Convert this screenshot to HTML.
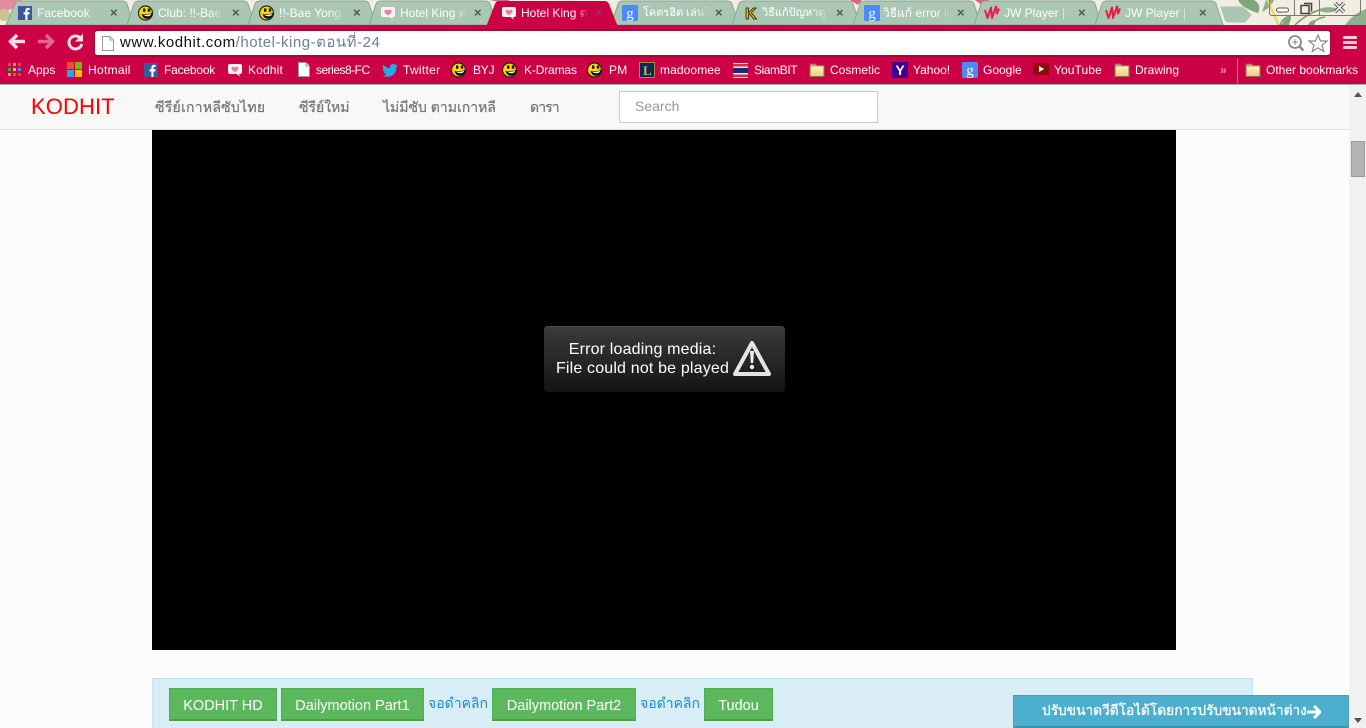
<!DOCTYPE html>
<html><head><meta charset="utf-8">
<style>
html,body{margin:0;padding:0;width:1366px;height:728px;overflow:hidden;background:#fcfcfc}
body{position:relative;font-family:"Liberation Sans","Noto Sans CJK SC",sans-serif}
.a{position:absolute;white-space:nowrap}
.tabtxt{top:5px;font-size:12px;line-height:16px;color:#fff;overflow:hidden;height:17px;-webkit-mask-image:linear-gradient(90deg,#000 78%,transparent 100%);mask-image:linear-gradient(90deg,#000 78%,transparent 100%)}
.x{top:5px;font-size:13px;line-height:16px;color:#555;font-weight:bold}
.bm{top:62px;font-size:12px;line-height:16px;color:#fff}
.ic{position:absolute}
.nav{top:97px;font-size:14px;line-height:20px;color:#777;-webkit-text-stroke:.25px #777}
.btn{background:#5cb85c;border:1px solid #4cae4c;border-bottom:2px solid #4a9e4a;color:#fff;font-size:14.5px;line-height:20px;text-align:center;box-sizing:border-box;padding-top:7px;top:688px;position:absolute;height:33px}
.th{font-size:14px;color:#1a8ad0;top:693px;line-height:20px}
</style></head><body>
<svg width="0" height="0" style="position:absolute"><defs>
<linearGradient id="fg" x1="0" y1="0" x2="0" y2="1"><stop offset="0" stop-color="#fff0c4"/><stop offset="1" stop-color="#f9c878"/></linearGradient>
<symbol id="fb" viewBox="0 0 14 14"><rect width="14" height="14" fill="#3b5998"/><path d="M9.500 14V8.500h1.800l.3-2.200H9.500V5c0-.7.2-1.100 1.100-1.100h1.100V2c-.3 0-.9-.1-1.600-.1-1.600 0-2.700 1-2.700 2.800v1.600H5.600v2.200h1.800V14z" fill="#fff"/></symbol>
<symbol id="sm" viewBox="0 0 16 16"><circle cx="7.500" cy="8" r="7" fill="#ffd800" stroke="#222" stroke-width="1.200"/><rect x="5" y="3.500" width="2.400" height="3.200" fill="#111"/><rect x="9.800" y="3.500" width="2.400" height="3.200" fill="#111"/><path d="M3.500 9c3 .8 7 .5 11-1.500 0 4-3 6.500-6 6.300C6 13.700 4.300 12 3.500 9z" fill="#111"/><path d="M5.200 9.800c2.500.4 5.500 0 8-1.200-.3 1.200-1 2-2.200 2.500-2 .4-4 0-5.800-1.300z" fill="#fff"/></symbol>
<symbol id="ht" viewBox="0 0 16 14"><path d="M3 1h10a2 2 0 0 1 2 2v6a2 2 0 0 1-2 2h-1l1 2.500L9.500 11H3a2 2 0 0 1-2-2V3a2 2 0 0 1 2-2z" fill="#f4f4f4"/><path d="M8 9.500C5.500 7.500 4.500 6.500 4.500 5c0-1.700 2.500-2 3.500-.3C9 3 11.500 3.300 11.500 5c0 1.500-1 2.500-3.500 4.500z" fill="#f27a9a"/></symbol>
<symbol id="g" viewBox="0 0 16 16"><rect width="16" height="16" rx="1.500" fill="#4c8bf5"/><text x="8" y="13" font-family="Liberation Serif,serif" font-size="15" fill="#fff" text-anchor="middle">g</text></symbol>
<symbol id="jw" viewBox="0 0 16 16"><path d="M1 5l2.500 8L7 2.500l1 10.500L12 1.500l1 7 2-5" fill="none" stroke="#ed1c47" stroke-width="2" stroke-linejoin="round"/></symbol>
<symbol id="fd" viewBox="0 0 16 15"><path d="M1 2h5.500L8 3.500h7v11H1z" fill="#c9a06a" stroke="#8f6f50" stroke-width="1"/><rect x="1.500" y="4.500" width="13" height="9.500" fill="url(#fg)"/></symbol>
<symbol id="pg" viewBox="0 0 12 15"><path d="M.5.500h7.500l3.500 3.500v10.500H.5z" fill="#fff" stroke="#999"/><path d="M8 .500V4h3.500" fill="#e8e8e8" stroke="#999"/></symbol>
</defs></svg>

<!-- window frame -->
<div class="a" style="left:0;top:0;width:1366px;height:25px;background:#f1ede0"></div>
<svg class="ic" style="left:0;top:0" width="1366" height="25">
<path d="M0 0h22l-10 9-12 4z" fill="#e58d9c"/><circle cx="4" cy="15" r="6" fill="#c9c48f"/>
<path d="M1238 0c3 6 10 10 20 13 3-5 1-10-4-13z" fill="#7fa578"/>
<path d="M1262 12c6-3 10-7 12-12h-8z" fill="#8fb08a"/>
<path d="M1268 0c3 9 8 17 10 25" stroke="#ecd774" stroke-width="2.500" fill="none"/>
<path d="M1280 25c2-5 6-8 10-9l-2 9zM1295 25c6-6 16-13 30-17M1311 25c4-5 8-7 14-8" stroke="#7d9f60" stroke-width="1.500" fill="none"/>
<path d="M1282 25c1-5 5-8 9-8 0 4-2 7-4 8z" fill="#7fa578"/>
<path d="M1318 10c5-3 13-4 20-1-4 4-14 5-20 1z" fill="#8fb08a"/>
<path d="M1345 25c5-6 10-12 21-16v16z" fill="#8fb08a"/>
<path d="M1308 25c2-4 5-5 8-5l-2 5z" fill="#7fa578"/>
<path d="M490 0h20l-6 3zM850 0h12l-4 5zM975 0h14l-6 6z" fill="#d8657f"/>
</svg>

<!-- tabs -->
<svg class="ic" style="left:0;top:0" width="1366" height="27">
<g fill="#a9c7b3" stroke="#8aa596" stroke-width="1">
<path d="M6 25 L15 4 Q16 1 20 1 H122 Q126 1 127 4 L134 25z"/>
<path d="M127 25 L134 4 Q135 1 139 1 H243 Q247 1 248 4 L255 25z"/>
<path d="M248 25 L255 4 Q256 1 260 1 H364 Q368 1 369 4 L376 25z"/>
<path d="M369 25 L376 4 Q377 1 381 1 H485 Q489 1 490 4 L497 25z"/>
<path d="M611 25 L618 4 Q619 1 623 1 H727 Q731 1 732 4 L739 25z"/>
<path d="M732 25 L739 4 Q740 1 744 1 H848 Q852 1 853 4 L860 25z"/>
<path d="M853 25 L860 4 Q861 1 865 1 H969 Q973 1 974 4 L981 25z"/>
<path d="M974 25 L981 4 Q982 1 986 1 H1090 Q1094 1 1095 4 L1102 25z"/>
<path d="M1095 25 L1102 4 Q1103 1 1107 1 H1211 Q1215 1 1216 4 L1223 25z"/>
</g>
<path d="M1221 7 H1240 Q1243 7 1245 9 L1251 15 L1245 22 H1229 Q1226 22 1225 19z" fill="#a9c7b3" stroke="#a9c7b3"/>
<path d="M486 27 L495 4 Q496 1 500 1 H604 Q608 1 609 4 L618 27z" fill="#cc0044"/>
</svg>
<svg class="ic" style="left:18px;top:6px" width="14" height="14"><use href="#fb"/></svg>
<svg class="ic" style="left:138px;top:5px" width="16" height="16"><use href="#sm"/></svg>
<svg class="ic" style="left:259px;top:5px" width="16" height="16"><use href="#sm"/></svg>
<svg class="ic" style="left:380px;top:6px" width="16" height="14"><use href="#ht"/></svg>
<svg class="ic" style="left:501px;top:6px" width="16" height="14"><use href="#ht"/></svg>
<svg class="ic" style="left:622px;top:5px" width="16" height="16"><use href="#g"/></svg>
<svg class="ic" style="left:744px;top:5px" width="16" height="16"><text x="1" y="14" font-family="Liberation Sans,sans-serif" font-size="16" font-weight="bold" fill="#f6c700" stroke="#111" stroke-width=".8">K</text></svg>
<svg class="ic" style="left:864px;top:5px" width="16" height="16"><use href="#g"/></svg>
<svg class="ic" style="left:984px;top:5px" width="16" height="16"><use href="#jw"/></svg>
<svg class="ic" style="left:1105px;top:5px" width="16" height="16"><use href="#jw"/></svg>
<div class="a tabtxt" style="left:37px;width:62px">Facebook</div><div class="a x" style="left:110px">×</div>
<div class="a tabtxt" style="left:158px;width:66px">Club: !!-Bae Yong</div><div class="a x" style="left:232px">×</div>
<div class="a tabtxt" style="left:279px;width:66px">!!-Bae Yong Joon</div><div class="a x" style="left:353px">×</div>
<div class="a tabtxt" style="left:400px;width:68px">Hotel King ตอน</div><div class="a x" style="left:474px">×</div>
<div class="a tabtxt" style="left:521px;width:68px">Hotel King ตอน</div><div class="a x" style="left:595px;color:#8a3a55">×</div>
<div class="a tabtxt" style="left:643px;width:66px;font-size:11px">โคตรฮิต เล่นไม่</div><div class="a x" style="left:715px">×</div>
<div class="a tabtxt" style="left:762px;width:68px;font-size:11px">วิธีแก้ปัญหาดู</div><div class="a x" style="left:836px">×</div>
<div class="a tabtxt" style="left:883px;width:68px">วิธีแก้ error loading</div><div class="a x" style="left:957px">×</div>
<div class="a tabtxt" style="left:1004px;width:68px">JW Player | "Error</div><div class="a x" style="left:1078px">×</div>
<div class="a tabtxt" style="left:1125px;width:68px">JW Player | Trouble</div><div class="a x" style="left:1199px">×</div>

<!-- window buttons -->
<div class="a" style="left:1269px;top:-2px;width:92px;height:18px;border:1px solid #7b7b70;border-radius:0 0 3px 3px;box-sizing:border-box"></div>
<div class="a" style="left:1294px;top:0;width:1px;height:15px;background:#7b7b70"></div>
<div class="a" style="left:1319px;top:0;width:1px;height:15px;background:#7b7b70"></div>
<svg class="ic" style="left:1270px;top:0" width="90" height="16">
<rect x="6.500" y="8" width="12" height="4" rx="2" fill="#fff" stroke="#555"/>
<rect x="31" y="5.500" width="8" height="8" fill="none" stroke="#444" stroke-width="1.500"/><path d="M34 3.500h7.500v8" fill="none" stroke="#444" stroke-width="1.500"/>
<path d="M65 3l9 9M74 3l-9 9" stroke="#555" stroke-width="3.500"/><path d="M65 3l9 9M74 3l-9 9" stroke="#fff" stroke-width="1.500"/>
</svg>

<!-- toolbar -->
<div class="a" style="left:0;top:25px;width:1366px;height:59px;background:#cc0044"></div>
<div class="a" style="left:0;top:84px;width:1366px;height:1px;background:#aaa"></div>
<svg class="ic" style="left:0;top:25px" width="95" height="32">
<path d="M17 10.500l-6.500 6.500 6.500 6.500M11 17h14" transform="translate(0,-.5)" stroke="#fbdbe6" stroke-width="3.500" fill="none"/>
<path d="M46 10.500l6.500 6.500-6.500 6.500M52 17H38" transform="translate(0,-.5)" stroke="#e0678f" stroke-width="3.500" fill="none"/>
<path d="M81 14a6.500 6.500 0 1 0 .8 5" stroke="#fbdbe6" stroke-width="3" fill="none"/><path d="M83 8.500v8h-8z" fill="#fbdbe6"/>
</svg>
<div class="a" style="left:94px;top:29px;width:1237px;height:28px;background:#fff;border:1px solid #a00836;border-width:2px 1px;border-radius:4px;box-sizing:border-box"></div>
<svg class="ic" style="left:102px;top:36px" width="12" height="15"><use href="#pg"/></svg>
<div class="a" style="left:120px;top:33px;font-size:15px;line-height:20px;color:#111;letter-spacing:.52px">www.kodhit.com<span style="color:#6d8097">/hotel-king-ตอนที่-24</span></div>
<svg class="ic" style="left:1286px;top:33px" width="44" height="20">
<circle cx="9" cy="9" r="6" fill="none" stroke="#888" stroke-width="1.800"/><path d="M13.500 13.500l4 4" stroke="#888" stroke-width="2.500"/><path d="M6 9h6M9 6v6" stroke="#888"/>
<path d="M32 2l2.600 6h6.400l-5 4.200 1.800 6.300-5.800-3.700-5.800 3.700 1.800-6.300-5-4.200h6.400z" fill="#fff" stroke="#888" stroke-width="1.200"/>
</svg>
<svg class="ic" style="left:1343px;top:35px" width="15" height="16"><rect width="14" height="3" y="1" rx="1" fill="#f8c8d8"/><rect width="14" height="3" y="6" rx="1" fill="#f8c8d8"/><rect width="14" height="3" y="11" rx="1" fill="#f8c8d8"/></svg>

<!-- bookmarks -->
<svg class="ic" style="left:8px;top:63px" width="14" height="14">
<g><rect width="3" height="3" fill="#e8453c"/><rect x="5" width="3" height="3" fill="#e8a33c"/><rect x="10" width="3" height="3" fill="#e8453c"/><rect y="5" width="3" height="3" fill="#3ca54c"/><rect x="5" y="5" width="3" height="3" fill="#e8c93c"/><rect x="10" y="5" width="3" height="3" fill="#4c8bf5"/><rect y="10" width="3" height="3" fill="#e8a33c"/><rect x="5" y="10" width="3" height="3" fill="#3ca54c"/><rect x="10" y="10" width="3" height="3" fill="#e8453c"/></g></svg>
<div class="a bm" style="left:28px">Apps</div>
<svg class="ic" style="left:67px;top:62px" width="15" height="15"><rect width="7" height="7" fill="#e8502a"/><rect x="8" width="7" height="7" fill="#7fba00"/><rect y="8" width="7" height="7" fill="#2aa4e8"/><rect x="8" y="8" width="7" height="7" fill="#fbbc05"/></svg>
<div class="a bm" style="left:88px;letter-spacing:.3px">Hotmail</div>
<svg class="ic" style="left:144px;top:63px" width="14" height="14"><use href="#fb"/></svg>
<div class="a bm" style="left:164px;letter-spacing:-.2px">Facebook</div>
<svg class="ic" style="left:227px;top:63px" width="16" height="14"><use href="#ht"/></svg>
<div class="a bm" style="left:248px;letter-spacing:.15px">Kodhit</div>
<svg class="ic" style="left:298px;top:62px" width="12" height="15"><use href="#pg"/></svg>
<div class="a bm" style="left:316px;letter-spacing:-.5px">series8-FC</div>
<svg class="ic" style="left:382px;top:63px" width="16" height="14"><path d="M16 2.500c-.6.300-1.200.4-1.900.5.700-.4 1.200-1 1.400-1.800-.6.400-1.300.6-2 .8a3.300 3.300 0 0 0-5.600 3C5.200 4.900 2.800 3.600 1.100 1.600c-.9 1.500-.4 3.400 1 4.400-.5 0-1-.2-1.500-.4 0 1.600 1.100 3 2.600 3.300-.5.100-1 .1-1.500 0 .4 1.300 1.600 2.200 3 2.300A6.600 6.600 0 0 1 0 12.500C6 15.500 14.800 13 14.400 4c.7-.4 1.200-1 1.600-1.500z" fill="#29a9e1"/></svg>
<div class="a bm" style="left:403px;letter-spacing:.3px">Twitter</div>
<svg class="ic" style="left:451px;top:62px" width="16" height="16"><use href="#sm"/></svg>
<div class="a bm" style="left:473px;letter-spacing:-.2px">BYJ</div>
<svg class="ic" style="left:502px;top:62px" width="16" height="16"><use href="#sm"/></svg>
<div class="a bm" style="left:524px;letter-spacing:-.15px">K-Dramas</div>
<svg class="ic" style="left:587px;top:62px" width="16" height="16"><use href="#sm"/></svg>
<div class="a bm" style="left:609px;letter-spacing:.2px">PM</div>
<svg class="ic" style="left:639px;top:62px" width="16" height="16"><rect width="16" height="16" fill="#0a2a5c"/><rect x=".5" y=".5" width="15" height="15" fill="none" stroke="#a88a3c"/><text x="4" y="13" font-family="Liberation Serif,serif" font-size="13" font-weight="bold" fill="#e0b040">L</text></svg>
<div class="a bm" style="left:660px;letter-spacing:.1px">madoomee</div>
<svg class="ic" style="left:733px;top:63px" width="15" height="15"><rect width="15" height="15" fill="#f4e4e8"/><rect y="1" width="15" height="2.500" fill="#c33"/><rect y="11.500" width="15" height="2.500" fill="#c33"/><rect y="5" width="15" height="5" fill="#1a2a7a"/></svg>
<div class="a bm" style="left:754px;letter-spacing:-.4px">SiamBIT</div>
<svg class="ic" style="left:809px;top:62px" width="16" height="15"><use href="#fd"/></svg>
<div class="a bm" style="left:830px">Cosmetic</div>
<svg class="ic" style="left:892px;top:62px" width="16" height="16"><rect width="16" height="16" fill="#400090"/><text x="8" y="13" font-family="Liberation Sans,sans-serif" font-size="14" font-weight="bold" fill="#fff" text-anchor="middle">Y</text></svg>
<div class="a bm" style="left:913px">Yahoo!</div>
<svg class="ic" style="left:962px;top:62px" width="16" height="16"><use href="#g"/></svg>
<div class="a bm" style="left:983px">Google</div>
<svg class="ic" style="left:1033px;top:62px" width="16" height="14"><rect width="16" height="12" y="1" rx="2" fill="#8f0a0a"/><path d="M6 4l5 3-5 3z" fill="#fff"/></svg>
<div class="a bm" style="left:1054px;letter-spacing:.1px">YouTube</div>
<svg class="ic" style="left:1114px;top:62px" width="16" height="15"><use href="#fd"/></svg>
<div class="a bm" style="left:1135px">Drawing</div>
<div class="a" style="left:1220px;top:62px;font-size:12px;line-height:16px;color:#d89ab0;font-weight:bold">»</div>
<div class="a" style="left:1237px;top:59px;width:1px;height:24px;background:#e77fa0"></div>
<svg class="ic" style="left:1245px;top:62px" width="16" height="15"><use href="#fd"/></svg>
<div class="a bm" style="left:1266px">Other bookmarks</div>

<!-- navbar -->
<div class="a" style="left:0;top:85px;width:1349px;height:45px;background:#f8f8f8;border-bottom:1px solid #e0e0e0;box-sizing:border-box"></div>
<div class="a" style="left:31px;top:94px;font-size:22px;line-height:26px;color:#f00;letter-spacing:.1px">KODHIT</div>
<div class="a nav" style="left:155px;letter-spacing:.25px">ซีรีย์เกาหลีซับไทย</div>
<div class="a nav" style="left:299px">ซีรีย์ใหม่</div>
<div class="a nav" style="left:383px">ไม่มีซับ ตามเกาหลี</div>
<div class="a nav" style="left:530px;letter-spacing:-.9px">ดารา</div>
<div class="a" style="left:619px;top:91px;width:259px;height:32px;background:#fff;border:1px solid #ccc;box-sizing:border-box;font-size:14px;line-height:29px;color:#999;padding-left:15px">Search</div>

<!-- player -->
<div class="a" style="left:152px;top:130px;width:1024px;height:520px;background:#000"></div>
<div class="a" style="left:544px;top:326px;width:241px;height:66px;border-radius:4px;background:linear-gradient(#3b3b3b,#141414);box-sizing:border-box;border-top:1px solid #4a4a4a"></div>
<div class="a" style="left:544px;top:340px;width:197px;text-align:center;font-size:16px;line-height:19px;color:#fff;letter-spacing:.17px">Error loading media:<br>File could not be played</div>
<svg class="ic" style="left:732px;top:339px" width="40" height="38"><path d="M20 4L37 35H3z" fill="none" stroke="#e4e4e4" stroke-width="4" stroke-linejoin="round"/><path d="M18 12h4l-.8 12h-2.400z" fill="#eee"/><circle cx="20" cy="28" r="2.200" fill="#eee"/></svg>

<!-- buttons panel -->
<div class="a" style="left:152px;top:678px;width:1101px;height:50px;background:#d9edf7;border:1px solid #bce8f1;border-bottom:0;box-sizing:border-box"></div>
<div class="btn" style="left:169px;width:108px">KODHIT HD</div>
<div class="btn" style="left:281px;width:143px">Dailymotion Part1</div>
<div class="a th" style="left:428px">จอดำคลิก</div>
<div class="btn" style="left:492px;width:144px">Dailymotion Part2</div>
<div class="a th" style="left:640px">จอดำคลิก</div>
<div class="btn" style="left:704px;width:69px">Tudou</div>

<!-- fixed resize banner -->
<div class="a" style="left:1013px;top:695px;width:336px;height:33px;background:#4bafcd;border:1px solid #46a0b8;border-bottom:2px solid #3f93a9;box-sizing:border-box;color:#fff;font-size:13.7px;line-height:30px;padding-left:28px;-webkit-text-stroke:.3px #fff">ปรับขนาดวีดีโอได้โดยการปรับขนาดหน้าต่าง</div>
<svg class="ic" style="left:1306px;top:704px" width="15" height="16"><path d="M8 2l6 6-6 6M13 8H1" stroke="#fff" stroke-width="3" fill="none"/></svg>

<!-- scrollbar -->
<div class="a" style="left:1349px;top:85px;width:17px;height:643px;background:#f1f1f1"></div>
<div class="a" style="left:1351px;top:141px;width:14px;height:36px;background:#b4b4b4;border:1px solid #9a9a9a;box-sizing:border-box"></div>
<svg class="ic" style="left:1353px;top:92px" width="10" height="6"><path d="M5 0l4 5H1z" fill="#505050"/></svg>
<svg class="ic" style="left:1353px;top:718px" width="10" height="6"><path d="M1 0h8L5 5z" fill="#505050"/></svg>
</body></html>
